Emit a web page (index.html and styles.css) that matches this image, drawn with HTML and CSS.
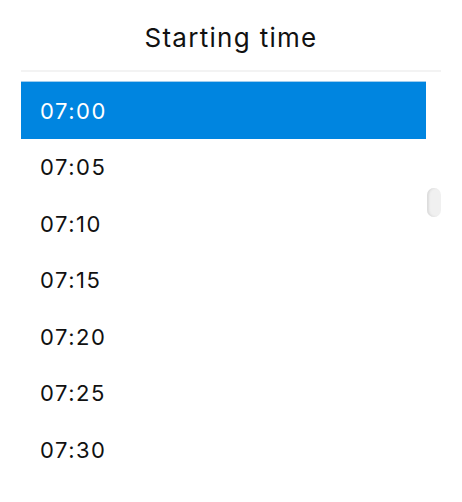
FILE: index.html
```html
<!DOCTYPE html>
<html>
<head>
<meta charset="utf-8">
<link rel="stylesheet" href="styles.css">
</head>
<body>
<div class="picker">
  <h1 class="title">Starting time</h1>
  <div class="divider"></div>
  <div class="body">
    <ul class="list">
      <li class="item selected">07:00</li>
      <li class="item">07:05</li>
      <li class="item">07:10</li>
      <li class="item">07:15</li>
      <li class="item">07:20</li>
      <li class="item">07:25</li>
      <li class="item">07:30</li>
    </ul>
    <div class="track"><div class="thumb"></div></div>
  </div>
</div>
</body>
</html>
```
FILE: styles.css
```css
html, body {
  margin: 0;
  padding: 0;
  background: #ffffff;
  overflow: hidden;
  height: 502px;
}
.picker {
  padding: 0 21px;
  font-family: "Inter", "Lato", sans-serif;
  color: #111111;
}
.title {
  margin: 0;
  padding-top: 21px;
  height: 48px;
  box-sizing: border-box;
  font-size: 26px;
  font-weight: 400;
  letter-spacing: 1.3px;
  text-align: center;
  line-height: 34px;
}
.divider {
  height: 2px;
  background: #f3f3f3;
  margin-top: 22px;
}
.body {
  display: flex;
  margin-top: 10px;
}
.list {
  list-style: none;
  margin: 0;
  padding: 0;
  width: 406px;
}
.item {
  height: 56.5px;
  display: flex;
  align-items: center;
  padding-left: 19px;
  font-size: 22px;
  letter-spacing: 1.5px;
}
.item.selected {
  background: #0085e0;
  color: #ffffff;
  height: 57px;
  box-shadow: 0 -1px 0 #9fcdee;
}
.track {
  width: 15px;
  padding-top: 106px;
}
.thumb {
  width: 14px;
  height: 29px;
  margin-left: 1px;
  border-radius: 7px;
  background: #f0f0f0;
  box-shadow: inset 2px 0 2px #dcdcdc;
}
```
